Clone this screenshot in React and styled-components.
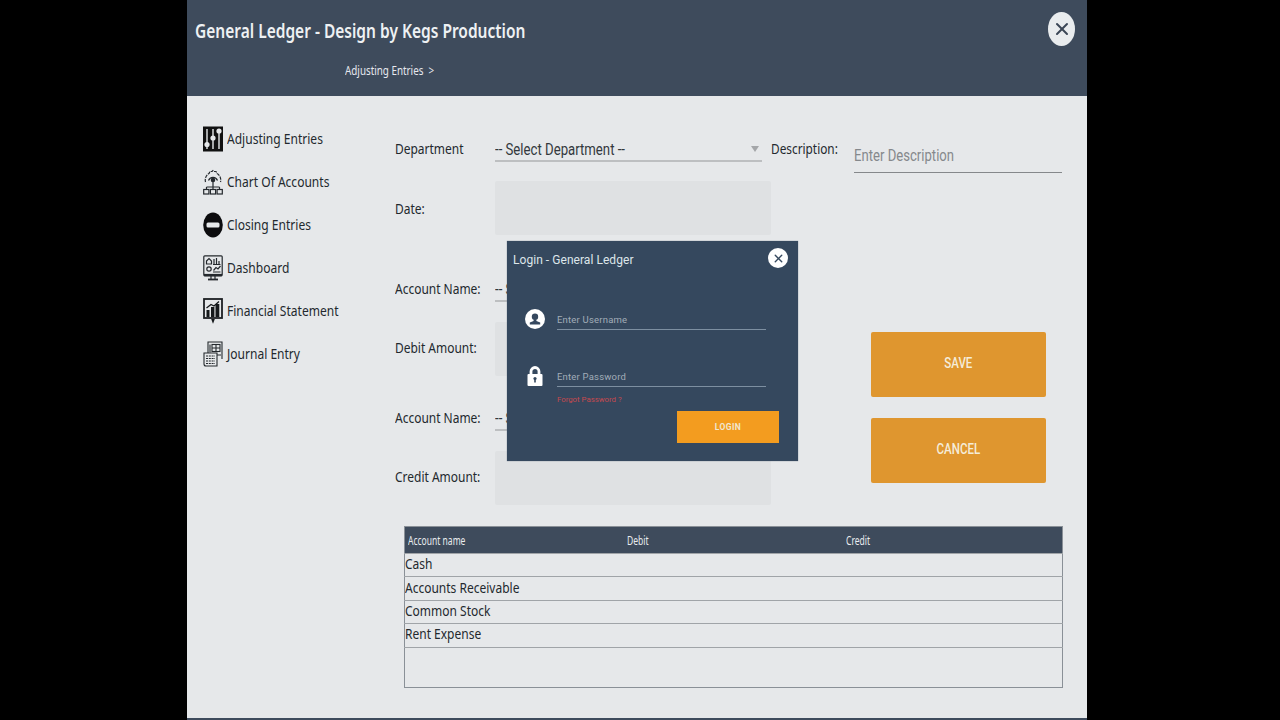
import React from 'react';
import styled, { createGlobalStyle } from 'styled-components';
import { X } from 'lucide-react';

const GlobalStyle = createGlobalStyle`
  html, body {
    margin: 0;
    height: 100%;
    background: #000;
    font-family: "Noto Sans", sans-serif;
  }
  * { box-sizing: border-box; }
`;

const Page = styled.div`
  width: 1280px;
  height: 720px;
  padding-left: 187px;
  overflow: hidden;
`;

const Window = styled.div`
  position: relative;
  width: 900px;
  height: 720px;
  background: #e6e8ea;
  border-bottom: 2px solid #3e4b5c;
`;

const Header = styled.header`
  position: relative;
  height: 96px;
  background: #3e4b5c;
  padding: 17px 12px 0 8px;
  display: flex;
  flex-direction: column;
`;

const TitleRow = styled.div`
  display: flex;
  justify-content: space-between;
  align-items: flex-start;
`;

const Title = styled.h1`
  margin: 0;
  font-size: 20px;
  line-height: 27px;
  font-weight: 600;
  color: #eef1f3;
  transform: scaleX(0.775);
  transform-origin: left center;
  white-space: pre;
`;

const HeaderClose = styled.button`
  width: 27px;
  height: 34px;
  margin-top: -5px;
  border: 0;
  padding: 0;
  border-radius: 50%;
  background: #e9ecee;
  color: #3a4655;
  display: flex;
  align-items: center;
  justify-content: center;
`;

const Crumb = styled.div`
  margin: 16px 0 0 150px;
  font-size: 12px;
  line-height: 18px;
  color: #e6e8ee;
  transform: scaleX(0.82);
  transform-origin: left center;
  white-space: pre;
`;

const Body = styled.div`
  display: flex;
`;

const Sidebar = styled.nav`
  width: 208px;
  padding: 30px 0 0 16px;
  display: flex;
  flex-direction: column;
  gap: 17px;
`;

const NavItem = styled.div`
  height: 26px;
  display: flex;
  align-items: center;
  gap: 4px;
`;

const NavIcon = styled.svg`
  width: 20px;
  height: 26px;
  flex: none;
`;

const NavLabel = styled.span`
  font-size: 14.5px;
  padding-bottom: 3px;
  color: #23282e;
  transform: scaleX(0.83);
  transform-origin: left center;
  white-space: nowrap;
`;

const Main = styled.main`
  flex: 1;
`;

const TopArea = styled.div`
  display: flex;
`;

const FormColumn = styled.div`
  width: 376px;
  padding-top: 41px;
`;

const FieldGroup = styled.div`
  display: flex;
  flex-direction: column;
  gap: ${p => p.$gap || 20}px;
  margin-top: ${p => p.$top || 0}px;
`;

const FieldRow = styled.div`
  display: flex;
  align-items: center;
`;

const Label = styled.label`
  width: 100px;
  flex: none;
  font-size: 14px;
  padding-bottom: ${p => (p.$low ? 0 : 3)}px;
  color: #23282e;
  transform: scaleX(0.855);
  transform-origin: left center;
  white-space: nowrap;
`;

const SelectBox = styled.div`
  width: 267px;
  height: 25px;
  border-bottom: 2px solid #bdbfc1;
  display: flex;
  align-items: center;
  justify-content: space-between;
  padding-right: 3px;
`;

const SelectText = styled.span`
  font-family: "Roboto", sans-serif;
  font-size: 17px;
  color: #33383d;
  transform: scaleX(0.775);
  transform-origin: left center;
  white-space: nowrap;
`;

const Caret = styled.span`
  width: 0;
  height: 0;
  border-left: 4px solid transparent;
  border-right: 4px solid transparent;
  border-top: 6px solid #a4a6a9;
`;

const EmptyField = styled.div`
  width: 276px;
  height: 54px;
  background: #dfe1e3;
  border-radius: 2px;
`;

const AsideColumn = styled.div`
  width: 291px;
  padding-top: 41px;
`;

const DescriptionRow = styled.div`
  display: flex;
  height: 36px;
`;

const DescriptionLabel = styled.label`
  width: 83px;
  flex: none;
  font-size: 14px;
  line-height: 24px;
  color: #23282e;
  transform: scaleX(0.845);
  transform-origin: left center;
  white-space: nowrap;
`;

const DescriptionInput = styled.div`
  flex: 1;
  height: 36px;
  border-bottom: 1px solid #85888b;
  font-family: "Roboto", sans-serif;
  font-size: 16px;
  line-height: 38px;
  color: #85888c;
`;

const Placeholder = styled.span`
  display: inline-block;
  transform: scaleX(0.82);
  transform-origin: left center;
  white-space: nowrap;
`;

const Actions = styled.div`
  margin: 159px 0 0 100px;
  display: flex;
  flex-direction: column;
  gap: 21px;
`;

const ActionButton = styled.button`
  width: 175px;
  height: 65px;
  border: 0;
  padding: 0 0 3px;
  border-radius: 2px;
  background: #df962f;
  color: #f5ecd9;
  font-family: "Roboto", sans-serif;
  font-size: 15px;
  font-weight: 500;
`;

const ActionText = styled.span`
  display: inline-block;
  transform: scaleX(0.77);
`;

const Ledger = styled.table`
  width: 659px;
  margin: 21px 0 0 9px;
  border-collapse: collapse;
  table-layout: fixed;
  border: 1px solid #8a9097;
`;

const HeadCell = styled.th`
  height: 27px;
  padding: 0 0 0 3px;
  background: #3e4b5c;
  color: #e9ecef;
  font-size: 12px;
  font-weight: 400;
  text-align: left;
`;

const HeadText = styled.span`
  display: inline-block;
  transform: scaleX(0.71);
  transform-origin: left center;
  white-space: nowrap;
`;

const Cell = styled.td`
  height: ${p => (p.$tall ? 40 : 23.4)}px;
  padding: 0 0 3px;
  border-top: 1px solid #a0a4a8;
  font-size: 15px;
  color: #23282e;
  line-height: 19px;
`;

const CellText = styled.span`
  display: inline-block;
  transform: scaleX(0.8);
  transform-origin: left center;
  white-space: nowrap;
`;

const Modal = styled.div`
  position: absolute;
  left: 320px;
  top: 241px;
  width: 291px;
  height: 220px;
  background: #35485e;
  box-shadow: 0 0 1px #6a7888;
  padding: 7px 10px 0 6px;
`;

const ModalHead = styled.div`
  display: flex;
  justify-content: space-between;
  align-items: center;
  height: 20px;
`;

const ModalTitle = styled.div`
  font-family: "Roboto", sans-serif;
  font-size: 12px;
  padding-top: 3px;
  letter-spacing: 0.05px;
  color: #dde6ea;
`;

const ModalClose = styled.button`
  width: 20px;
  height: 20px;
  border: 0;
  padding: 0;
  border-radius: 50%;
  background: #fff;
  color: #35485e;
  display: flex;
  align-items: center;
  justify-content: center;
`;

const LoginRow = styled.div`
  display: flex;
  align-items: center;
  margin: ${p => p.$top}px 0 0 12px;
  height: 22px;
`;

const LoginIcon = styled.svg`
  width: 20px;
  height: 22px;
  flex: none;
  margin-right: 12px;
`;

const LoginInput = styled.div`
  width: 209px;
  height: 22px;
  border-bottom: 1px solid #7d8fa1;
  font-family: "Roboto", sans-serif;
  font-size: 9.5px;
  line-height: 24px;
  letter-spacing: 0.2px;
  color: #a2adb8;
`;

const Forgot = styled.div`
  margin: 8px 0 0 44px;
  font-family: "Roboto", sans-serif;
  font-size: 7.8px;
  line-height: 10px;
  color: #c5494f;
`;

const LoginButton = styled.button`
  display: block;
  width: 102px;
  height: 32px;
  margin: 6px 0 0 164px;
  border: 0;
  background: #f39c1f;
  color: #f0e6d0;
  font-family: "Roboto", sans-serif;
  font-size: 8.5px;
  font-weight: 700;
  letter-spacing: 0.4px;
`;

const AdjustIcon = () => (
  <NavIcon viewBox="0 0 20 26">
    <rect width="20" height="25" y="0.5" fill="#111" />
    <g stroke="#e6e8ea" strokeWidth="1.4">
      <path d="M4 3v20M10 3v20M16 3v20" />
    </g>
    <g fill="#e6e8ea">
      <circle cx="4" cy="18.5" r="2.6" />
      <circle cx="10" cy="12" r="2.6" />
      <circle cx="16" cy="5" r="2.6" />
    </g>
  </NavIcon>
);

const ChartIcon = () => (
  <NavIcon viewBox="0 0 20 26">
    <g fill="none" stroke="#24282d" strokeWidth="1.2">
      <path d="M2.5 13 A7.5 7.5 0 0 1 6 4.5 L7 2.5 H9 L10 1.5 L11 2.5 H13 L14 4.5 A7.5 7.5 0 0 1 17.5 13" strokeDasharray="3.2 1" />
      <path d="M5.5 11.5 A4.8 4.8 0 0 1 14.5 11.5" />
      <circle cx="10" cy="11" r="1.7" fill="#24282d" />
      <path d="M10 13v5M3.5 18v2.5M10 18v2.5M16.5 18v2.5M3.5 18h13" />
      <rect x="0.7" y="20.5" width="5.2" height="4.5" />
      <rect x="7.4" y="20.5" width="5.2" height="4.5" />
      <rect x="14.1" y="20.5" width="5.2" height="4.5" />
    </g>
  </NavIcon>
);

const ClosingIcon = () => (
  <NavIcon viewBox="0 0 20 26">
    <ellipse cx="10" cy="13" rx="9.8" ry="12.5" fill="#0c0c0e" />
    <rect x="3.5" y="10.5" width="13" height="5" rx="1.5" fill="#e6e8ea" />
  </NavIcon>
);

const DashboardIcon = () => (
  <NavIcon viewBox="0 0 20 26">
    <g fill="none" stroke="#24282d" strokeWidth="1.2">
      <rect x="0.8" y="0.8" width="18.4" height="20" rx="1" />
      <path d="M1 20h18" strokeWidth="2.2" />
      <path d="M5 24.5h10" strokeWidth="1.8" />
      <path d="M8 21v3M12 21v3" />
      <path d="M3.5 6 L6 3.5 L8.5 6 V9 H3.5Z" />
      <circle cx="6" cy="14" r="2.2" />
      <path d="M10 9.5h7.5M10 17h7.5M11 9V4M13.5 9V3M16 9V6" />
      <path d="M10.5 15.5l2.5-3 2 1.5 2.5-3" />
    </g>
  </NavIcon>
);

const FinanceIcon = () => (
  <NavIcon viewBox="0 0 20 26">
    <rect x="1" y="1" width="18" height="19" fill="none" stroke="#1c1f23" strokeWidth="1.8" />
    <g fill="#15181b">
      <rect x="3.5" y="12" width="3" height="7" />
      <rect x="8" y="9" width="3.4" height="10" />
      <rect x="12.5" y="6" width="3.8" height="13" />
      <path d="M8.2 21h3.6l-1.8 4.8z" />
    </g>
    <path d="M3.5 10 L8 6.5 L11 8 L16 3.5" fill="none" stroke="#15181b" strokeWidth="1.3" />
  </NavIcon>
);

const JournalIcon = () => (
  <NavIcon viewBox="0 0 20 26">
    <g fill="none" stroke="#24282d" strokeWidth="1.1">
      <path d="M5 13V1h14v17" />
      <rect x="9" y="3.5" width="8" height="7" />
      <path d="M13 3.5v7M9 7h8" />
      <path d="M7 3.5v8M7 14h11" />
      <path d="M1 12h13v13H3a2 2 0 0 1-2-2z" fill="#e6e8ea" />
      <path d="M3 15h9M3 17.5h9M3 20h9M3 22.5h9" strokeDasharray="2 0.8" />
    </g>
  </NavIcon>
);

const UserIcon = () => (
  <LoginIcon viewBox="0 0 20 22">
    <circle cx="10" cy="11" r="10" fill="#fff" />
    <circle cx="10" cy="8.8" r="3.2" fill="#35485e" />
    <path d="M8.6 11.5h2.8v1.5l3.8 1.6v1.9H4.8v-1.9L8.6 13z" fill="#35485e" />
  </LoginIcon>
);

const LockIcon = () => (
  <LoginIcon viewBox="0 0 20 22">
    <path d="M6 10V6.5a4 4 0 0 1 8 0V10" fill="none" stroke="#fff" strokeWidth="2.8" />
    <rect x="2.5" y="9" width="15" height="12" rx="1" fill="#fff" />
    <circle cx="10" cy="13.5" r="1.6" fill="#35485e" />
    <rect x="9.2" y="13.5" width="1.6" height="4" fill="#35485e" />
  </LoginIcon>
);

const navItems = [
  { label: 'Adjusting Entries', Icon: AdjustIcon },
  { label: 'Chart Of Accounts', Icon: ChartIcon },
  { label: 'Closing Entries', Icon: ClosingIcon },
  { label: 'Dashboard', Icon: DashboardIcon },
  { label: 'Financial Statement', Icon: FinanceIcon },
  { label: 'Journal Entry', Icon: JournalIcon },
];

const accounts = ['Cash', 'Accounts Receivable', 'Common Stock', 'Rent Expense'];

const App = () => (
  <Page>
    <GlobalStyle />
    <Window>
      <Header>
        <TitleRow>
          <Title>General Ledger - Design by Kegs Production</Title>
          <HeaderClose>
            <X size={20} strokeWidth={2.4} />
          </HeaderClose>
        </TitleRow>
        <Crumb>Adjusting Entries  &gt;</Crumb>
      </Header>
      <Body>
        <Sidebar>
          {navItems.map(({ label, Icon }) => (
            <NavItem key={label}>
              <Icon />
              <NavLabel>{label}</NavLabel>
            </NavItem>
          ))}
        </Sidebar>
        <Main>
          <TopArea>
            <FormColumn>
              <FieldGroup $gap={19}>
                <FieldRow>
                  <Label>Department</Label>
                  <SelectBox>
                    <SelectText>-- Select Department --</SelectText>
                    <Caret />
                  </SelectBox>
                </FieldRow>
                <FieldRow>
                  <Label $low>Date:</Label>
                  <EmptyField />
                </FieldRow>
              </FieldGroup>
              <FieldGroup $top={42}>
                <FieldRow>
                  <Label>Account Name:</Label>
                  <SelectBox>
                    <SelectText>-- Select Account --</SelectText>
                    <Caret />
                  </SelectBox>
                </FieldRow>
                <FieldRow>
                  <Label>Debit Amount:</Label>
                  <EmptyField />
                </FieldRow>
              </FieldGroup>
              <FieldGroup $top={30}>
                <FieldRow>
                  <Label>Account Name:</Label>
                  <SelectBox>
                    <SelectText>-- Select Account --</SelectText>
                    <Caret />
                  </SelectBox>
                </FieldRow>
                <FieldRow>
                  <Label>Credit Amount:</Label>
                  <EmptyField />
                </FieldRow>
              </FieldGroup>
            </FormColumn>
            <AsideColumn>
              <DescriptionRow>
                <DescriptionLabel>Description:</DescriptionLabel>
                <DescriptionInput>
                  <Placeholder>Enter Description</Placeholder>
                </DescriptionInput>
              </DescriptionRow>
              <Actions>
                <ActionButton><ActionText>SAVE</ActionText></ActionButton>
                <ActionButton><ActionText>CANCEL</ActionText></ActionButton>
              </Actions>
            </AsideColumn>
          </TopArea>
          <Ledger>
            <thead>
              <tr>
                <HeadCell><HeadText>Account name</HeadText></HeadCell>
                <HeadCell><HeadText>Debit</HeadText></HeadCell>
                <HeadCell><HeadText>Credit</HeadText></HeadCell>
              </tr>
            </thead>
            <tbody>
              {accounts.map(name => (
                <tr key={name}>
                  <Cell colSpan={3}><CellText>{name}</CellText></Cell>
                </tr>
              ))}
              <tr>
                <Cell colSpan={3} $tall />
              </tr>
            </tbody>
          </Ledger>
        </Main>
      </Body>
      <Modal>
        <ModalHead>
          <ModalTitle>Login - General Ledger</ModalTitle>
          <ModalClose>
            <X size={13} strokeWidth={2.6} />
          </ModalClose>
        </ModalHead>
        <LoginRow $top={40}>
          <UserIcon />
          <LoginInput>Enter Username</LoginInput>
        </LoginRow>
        <LoginRow $top={35}>
          <LockIcon />
          <LoginInput>Enter Password</LoginInput>
        </LoginRow>
        <Forgot>Forgot Password ?</Forgot>
        <LoginButton>LOGIN</LoginButton>
      </Modal>
    </Window>
  </Page>
);

export default App;
